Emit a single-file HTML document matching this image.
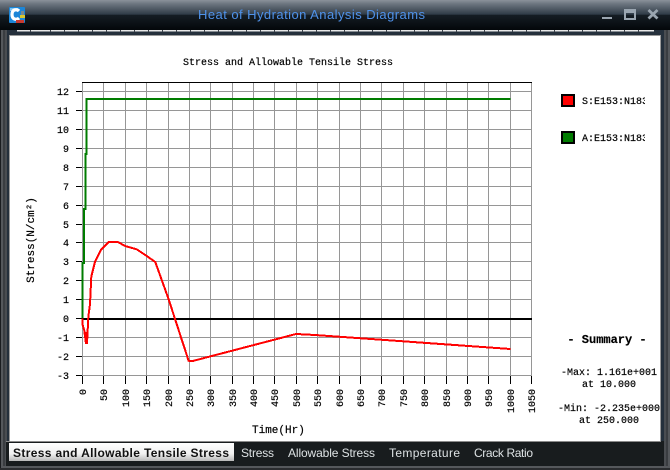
<!DOCTYPE html>
<html><head><meta charset="utf-8"><style>
html,body{margin:0;padding:0;background:#000;width:670px;height:470px;overflow:hidden}
svg{display:block}
.m{font-family:"Liberation Mono",monospace;font-size:10px;fill:#000;stroke:#000;stroke-width:.18px}
.s{font-family:"Liberation Sans",sans-serif;font-size:12px;fill:#dde2e4}
</style></head><body>
<svg width="670" height="470" viewBox="0 0 670 470" xmlns="http://www.w3.org/2000/svg">
<defs>
<linearGradient id="tb" x1="0" y1="0" x2="0" y2="1">
<stop offset="0" stop-color="#8b929a"/><stop offset=".12" stop-color="#6e7781"/><stop offset=".48" stop-color="#2f3b47"/><stop offset=".5" stop-color="#151d24"/><stop offset="1" stop-color="#03070a"/>
</linearGradient>
<linearGradient id="at" x1="0" y1="0" x2="0" y2="1">
<stop offset="0" stop-color="#fff"/><stop offset=".6" stop-color="#f0f0f0"/><stop offset="1" stop-color="#b8b8b8"/>
</linearGradient>
<clipPath id="lc"><rect x="580" y="85" width="65" height="70"/></clipPath>
</defs>
<rect width="670" height="470" fill="#3b3d40"/>
<rect x="0" y="30" width="1" height="440" fill="#1a1c1f"/>
<rect x="1" y="30" width="2" height="437" fill="#55585c"/>
<rect x="3" y="30" width="2" height="437" fill="#3a3d41"/>
<rect x="5" y="30" width="2" height="437" fill="#4a4d51"/>
<rect x="7" y="30" width="2" height="412" fill="#25303c"/>
<rect x="661" y="30" width="3" height="412" fill="#25303c"/>
<rect x="664" y="30" width="2" height="437" fill="#4a4d51"/>
<rect x="666" y="30" width="2" height="437" fill="#3a3d41"/>
<rect x="668" y="30" width="2" height="440" fill="#55585c"/>
<rect x="1" y="466" width="668" height="2" fill="#55585c"/>
<rect x="0" y="468" width="670" height="2" fill="#2a2c2f"/>
<rect x="0" y="0" width="670" height="30" fill="url(#tb)"/>
<rect x="7" y="30" width="656" height="5" fill="#25303c"/>
<rect x="17" y="30" width="637" height="1.5" fill="#e8e8e8" shape-rendering="crispEdges"/>
<g fill="#3a4048" shape-rendering="crispEdges">
<rect x="30" y="30" width="1" height="2"/><rect x="50" y="30" width="1" height="2"/><rect x="64" y="30" width="1" height="2"/><rect x="78" y="30" width="1" height="2"/><rect x="92" y="30" width="1" height="2"/><rect x="106" y="30" width="1" height="2"/><rect x="120" y="30" width="1" height="2"/><rect x="134" y="30" width="1" height="2"/><rect x="148" y="30" width="1" height="2"/><rect x="162" y="30" width="1" height="2"/><rect x="176" y="30" width="1" height="2"/><rect x="190" y="30" width="1" height="2"/><rect x="204" y="30" width="1" height="2"/><rect x="218" y="30" width="1" height="2"/><rect x="232" y="30" width="1" height="2"/><rect x="246" y="30" width="1" height="2"/><rect x="260" y="30" width="1" height="2"/><rect x="274" y="30" width="1" height="2"/><rect x="288" y="30" width="1" height="2"/><rect x="302" y="30" width="1" height="2"/><rect x="316" y="30" width="1" height="2"/><rect x="330" y="30" width="1" height="2"/><rect x="344" y="30" width="1" height="2"/><rect x="358" y="30" width="1" height="2"/><rect x="372" y="30" width="1" height="2"/><rect x="386" y="30" width="1" height="2"/><rect x="400" y="30" width="1" height="2"/><rect x="414" y="30" width="1" height="2"/><rect x="428" y="30" width="1" height="2"/><rect x="442" y="30" width="1" height="2"/><rect x="456" y="30" width="1" height="2"/><rect x="470" y="30" width="1" height="2"/><rect x="484" y="30" width="1" height="2"/><rect x="498" y="30" width="1" height="2"/><rect x="512" y="30" width="1" height="2"/><rect x="526" y="30" width="1" height="2"/><rect x="540" y="30" width="1" height="2"/><rect x="554" y="30" width="1" height="2"/><rect x="568" y="30" width="1" height="2"/><rect x="582" y="30" width="1" height="2"/><rect x="596" y="30" width="1" height="2"/><rect x="610" y="30" width="1" height="2"/><rect x="624" y="30" width="1" height="2"/><rect x="638" y="30" width="1" height="2"/>
</g>
<rect x="9" y="35" width="652" height="407" fill="#9a9a9a"/>
<rect x="10" y="36" width="650" height="405" fill="#fff"/>
<rect x="6" y="441" width="658" height="25" fill="#181c1e"/>
<rect x="6" y="441" width="655" height="1" fill="#8a8a8a"/>

<!-- icon -->
<rect x="9" y="7" width="16" height="16" rx="1" fill="#1c86d8"/>
<rect x="10" y="8" width="8" height="3" fill="#7cc4f4"/>
<path d="M19 11 C17 9 12 9 12 14.5 C12 20 17 20 19 18" fill="none" stroke="#fff" stroke-width="3.2"/>
<rect x="20" y="15" width="5" height="3" fill="#d8c830"/>
<rect x="16" y="20" width="8" height="3" fill="#c83a30"/>
<rect x="21" y="11" width="3" height="4" fill="#7a8a90"/>

<text x="198" y="19" font-family="'Liberation Sans',sans-serif" font-size="13" fill="#4f92ea" textLength="227" lengthAdjust="spacing">Heat of Hydration Analysis Diagrams</text>

<!-- window buttons -->
<rect x="602" y="17" width="10" height="2" fill="#9aa5b0"/>
<path d="M624 9h12v11h-12zM626 13v5h8v-5z" fill="#9aa5b0" fill-rule="evenodd"/>
<path d="M648.5 10 L657.5 18.5 M657.5 10 L648.5 18.5" stroke="#9aa5b0" stroke-width="2.8" fill="none"/>

<!-- grid -->
<path shape-rendering="crispEdges" fill="none" stroke="#969696" d="M82.5 82.5V375.5M103.5 82.5V375.5M125.5 82.5V375.5M146.5 82.5V375.5M168.5 82.5V375.5M189.5 82.5V375.5M210.5 82.5V375.5M232.5 82.5V375.5M253.5 82.5V375.5M274.5 82.5V375.5M296.5 82.5V375.5M317.5 82.5V375.5M339.5 82.5V375.5M360.5 82.5V375.5M381.5 82.5V375.5M403.5 82.5V375.5M424.5 82.5V375.5M446.5 82.5V375.5M467.5 82.5V375.5M488.5 82.5V375.5M510.5 82.5V375.5M531.5 82.5V375.5
M82 91.5H532M82 110.5H532M82 129.5H532M82 148.5H532M82 167.5H532M82 186.5H532M82 205.5H532M82 224.5H532M82 242.5H532M82 261.5H532M82 280.5H532M82 299.5H532M82 337.5H532M82 356.5H532M82 375.5H532"/>
<path shape-rendering="crispEdges" fill="none" stroke="#000" d="M82 82.5H532M76 91.5H82M76 110.5H82M76 129.5H82M76 148.5H82M76 167.5H82M76 186.5H82M76 205.5H82M76 224.5H82M76 242.5H82M76 261.5H82M76 280.5H82M76 299.5H82M76 318.5H82M76 337.5H82M76 356.5H82M76 375.5H82
M82.5 376V384M103.5 376V384M125.5 376V384M146.5 376V384M168.5 376V384M189.5 376V384M210.5 376V384M232.5 376V384M253.5 376V384M274.5 376V384M296.5 376V384M317.5 376V384M339.5 376V384M360.5 376V384M381.5 376V384M403.5 376V384M424.5 376V384M446.5 376V384M467.5 376V384M488.5 376V384M510.5 376V384M531.5 376V384"/>
<rect x="82" y="318" width="450" height="2" fill="#000" shape-rendering="crispEdges"/>

<!-- curves -->
<path fill="none" stroke="#007c00" stroke-width="2" shape-rendering="crispEdges" d="M82.5 318V263H84V209H85.3V154H86.3V99H510.5"/>
<path fill="none" stroke="#f00" stroke-width="2" stroke-linejoin="bevel" shape-rendering="crispEdges" d="M82.7 318.7L82.7 325L84.3 330.7L86 344L85.7 332L87 344L88.3 317.3L90 304L91.3 276.7L95 261.7L101.3 249.3L108.7 242L118 242L125 246L136.7 249.3L146.7 256L155.3 262L168.3 298.3L188.7 361L192.7 361L296 334L315 335L510.5 349"/>

<!-- title -->
<text class="m" x="183" y="65">Stress and Allowable Tensile Stress</text>

<!-- y labels -->
<g class="m" text-anchor="end">
<text x="69" y="95">12</text><text x="69" y="114">11</text><text x="69" y="133">10</text><text x="69" y="152">9</text><text x="69" y="171">8</text><text x="69" y="190">7</text><text x="69" y="209">6</text><text x="69" y="228">5</text><text x="69" y="246">4</text><text x="69" y="265">3</text><text x="69" y="284">2</text><text x="69" y="303">1</text><text x="69" y="322">0</text><text x="69" y="341">-1</text><text x="69" y="360">-2</text><text x="69" y="379">-3</text>
</g>
<!-- x labels -->
<g class="m" text-anchor="end">
<text transform="translate(86 389) rotate(-90)">0</text>
<text transform="translate(107 389) rotate(-90)">50</text>
<text transform="translate(129 389) rotate(-90)">100</text>
<text transform="translate(150 389) rotate(-90)">150</text>
<text transform="translate(172 389) rotate(-90)">200</text>
<text transform="translate(193 389) rotate(-90)">250</text>
<text transform="translate(214 389) rotate(-90)">300</text>
<text transform="translate(236 389) rotate(-90)">350</text>
<text transform="translate(257 389) rotate(-90)">400</text>
<text transform="translate(278 389) rotate(-90)">450</text>
<text transform="translate(300 389) rotate(-90)">500</text>
<text transform="translate(321 389) rotate(-90)">550</text>
<text transform="translate(343 389) rotate(-90)">600</text>
<text transform="translate(364 389) rotate(-90)">650</text>
<text transform="translate(385 389) rotate(-90)">700</text>
<text transform="translate(407 389) rotate(-90)">750</text>
<text transform="translate(428 389) rotate(-90)">800</text>
<text transform="translate(450 389) rotate(-90)">850</text>
<text transform="translate(471 389) rotate(-90)">900</text>
<text transform="translate(492 389) rotate(-90)">950</text>
<text transform="translate(514 389) rotate(-90)">1000</text>
<text transform="translate(535 389) rotate(-90)">1050</text>
</g>
<text class="m" style="font-size:11px" x="252" y="433">Time(Hr)</text>
<text class="m" style="font-size:11px" text-anchor="middle" transform="translate(34 240) rotate(-90)">Stress(N/cm²)</text>

<!-- legend -->
<rect x="562" y="95" width="12" height="11" fill="#f00" stroke="#000" stroke-width="2" shape-rendering="crispEdges"/>
<rect x="562" y="132" width="12" height="11" fill="#007c00" stroke="#000" stroke-width="2" shape-rendering="crispEdges"/>
<g clip-path="url(#lc)">
<text class="m" x="582" y="104">S:E153:N183</text>
<text class="m" x="582" y="141">A:E153:N183</text>
</g>

<!-- summary -->
<text class="m" style="font-size:12px;font-weight:bold" x="607" y="343" text-anchor="middle">- Summary -</text>
<g class="m" text-anchor="middle">
<text x="609" y="375">-Max: 1.161e+001</text>
<text x="609" y="387">at 10.000</text>
<text x="609" y="411">-Min: -2.235e+000</text>
<text x="609" y="423">at 250.000</text>
</g>

<!-- tabs -->
<rect x="9" y="443" width="225" height="18" fill="url(#at)"/>
<text x="13" y="457" font-family="'Liberation Sans',sans-serif" font-size="12" font-weight="bold" fill="#111" textLength="216">Stress and Allowable Tensile Stress</text>
<text class="s" x="241" y="457" textLength="33">Stress</text>
<text class="s" x="288" y="457" textLength="87">Allowable Stress</text>
<text class="s" x="389" y="457" textLength="71">Temperature</text>
<text class="s" x="474" y="457" textLength="59">Crack Ratio</text>
</svg>
</body></html>
